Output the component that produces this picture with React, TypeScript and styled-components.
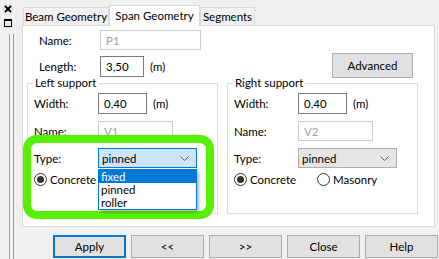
import React from "react";
import styled, { createGlobalStyle } from "styled-components";

const GlobalStyle = createGlobalStyle`
  html, body { margin: 0; padding: 0; }
  body {
    background: #f0f0f0;
    font-family: Lato, "Noto Sans", sans-serif;
    font-size: 11.5px;
    color: #000;
  }
  #root { width: 439px; height: 259px; overflow: hidden; }
`;

const Window = styled.div`
  display: flex;
  width: 439px;
  height: 259px;
  background: #f0f0f0;
`;

const Dock = styled.div`
  width: 22px;
  flex: none;
  display: flex;
  flex-direction: column;
  align-items: flex-start;
  padding: 4px 0 0 3px;
  box-sizing: border-box;
  gap: 4px;
`;

const DockButton = styled.div`
  width: 10px;
  height: 10px;
  display: flex;
`;

const Grip = styled.div`
  flex: 1;
  width: 3px;
  margin: 2px 0 0 6px;
  border-left: 1px solid #a0a0a0;
  border-right: 1px solid #a0a0a0;
`;

const Main = styled.div`
  flex: 1;
  display: flex;
  flex-direction: column;
`;

const TabStrip = styled.div`
  height: 25px;
  display: flex;
  align-items: flex-end;
  padding-left: 1px;
`;

const Tab = styled.div<{ $w: number; $active?: boolean }>`
  position: relative;
  box-sizing: border-box;
  width: ${(p) => p.$w}px;
  height: ${(p) => (p.$active ? 21 : 18)}px;
  margin-bottom: ${(p) => (p.$active ? -1 : 0)}px;
  border: 1px solid #d9d9d9;
  border-bottom: none;
  background: ${(p) => (p.$active ? "#ffffff" : "#f0f0f0")};
  z-index: ${(p) => (p.$active ? 2 : 0)};
  display: flex;
  align-items: center;
  justify-content: center;
  padding-bottom: ${(p) => (p.$active ? 2 : 0)}px;
  white-space: nowrap;
`;

const Panel = styled.div`
  position: relative;
  box-sizing: border-box;
  width: 413px;
  height: 202px;
  border: 1px solid #d9d9d9;
  background: #ffffff;
  display: flex;
  flex-direction: column;
`;

const TopArea = styled.div`
  display: flex;
  height: 57px;
  box-sizing: border-box;
  padding: 4px 0 0 16px;
`;

const FieldColumn = styled.div`
  display: flex;
  flex-direction: column;
  gap: 6px;
`;

const FieldRow = styled.div<{ $h?: number }>`
  display: flex;
  align-items: center;
  height: ${(p) => p.$h ?? 20}px;
`;

const Label = styled.div<{ $w: number }>`
  width: ${(p) => p.$w}px;
  flex: none;
`;

const TextBox = styled.div<{ $w: number; $h?: number; $disabled?: boolean }>`
  box-sizing: border-box;
  width: ${(p) => p.$w}px;
  height: ${(p) => p.$h ?? 20}px;
  border: 1px solid ${(p) => (p.$disabled ? "#cccccc" : "#7a7a7a")};
  color: ${(p) => (p.$disabled ? "#a0a0a0" : "#000")};
  background: #fff;
  display: flex;
  align-items: center;
  padding-left: 5px;
  flex: none;
`;

const Unit = styled.div`
  margin-left: 6px;
`;

const PushButton = styled.div<{ $w: number; $default?: boolean }>`
  box-sizing: border-box;
  width: ${(p) => p.$w}px;
  height: 23px;
  background: #e1e1e1;
  border: ${(p) => (p.$default ? "2px solid #0078d7" : "1px solid #adadad")};
  display: flex;
  align-items: center;
  justify-content: center;
  flex: none;
`;

const AdvancedButton = styled(PushButton)`
  height: 25px;
  margin: 23px 21px 0 auto;
`;

const Groups = styled.div`
  display: flex;
  gap: 9px;
  padding-left: 4px;
`;

const GroupBox = styled.div`
  position: relative;
  box-sizing: border-box;
  width: 191px;
  height: 131px;
  border: 1px solid #dcdcdc;
  display: flex;
  flex-direction: column;
  padding: 9px 0 0 6px;
  gap: 7px;
`;

const GroupTitle = styled.div`
  position: absolute;
  top: -9px;
  left: 5px;
  padding: 0 2px;
  background: #fff;
  line-height: 16px;
`;

const SelectWrap = styled.div`
  position: relative;
  flex: none;
`;

const Select = styled.div<{ $open?: boolean }>`
  box-sizing: border-box;
  width: 99px;
  height: 20px;
  border: 1px solid ${(p) => (p.$open ? "#0078d7" : "#adadad")};
  background: ${(p) => (p.$open ? "#cce4f7" : "#e5e5e5")};
  display: flex;
  align-items: center;
  padding: 0 7px 0 3px;
  justify-content: space-between;
`;

const DropList = styled.div`
  position: absolute;
  top: 100%;
  left: 0;
  width: 99px;
  box-sizing: border-box;
  border: 1px solid #0078d7;
  background: #fff;
  box-shadow: 2px 2px 3px rgba(0, 0, 0, 0.3);
  z-index: 5;
  margin-top: 1px;
`;

const DropItem = styled.div<{ $hl?: boolean }>`
  height: 13px;
  line-height: 13px;
  padding-left: 2px;
  background: ${(p) => (p.$hl ? "#0078d7" : "transparent")};
  color: ${(p) => (p.$hl ? "#fff" : "#000")};
`;

const RadioRow = styled.div`
  display: flex;
  align-items: center;
  height: 14px;
  margin-top: -3px;
`;

const RadioOption = styled.div<{ $w?: number }>`
  display: flex;
  align-items: center;
  gap: 3px;
  width: ${(p) => (p.$w ? `${p.$w}px` : "auto")};
`;

const RadioCircle = styled.div<{ $checked?: boolean }>`
  box-sizing: border-box;
  width: 13px;
  height: 13px;
  border-radius: 50%;
  border: 1px solid #333;
  background: #fff;
  display: flex;
  align-items: center;
  justify-content: center;
  &::after {
    content: "";
    width: 7px;
    height: 7px;
    border-radius: 50%;
    background: ${(p) => (p.$checked ? "#333" : "transparent")};
  }
`;

const Highlight = styled.div`
  position: absolute;
  left: 0;
  top: 109px;
  width: 191px;
  height: 84px;
  box-sizing: border-box;
  border: 8px solid #57f000;
  border-radius: 14px;
  pointer-events: none;
  z-index: 4;
`;

const ButtonBar = styled.div`
  display: flex;
  gap: 5px;
  padding: 8px 0 0 31px;
`;

const Chevron = () => (
  <svg width="9" height="5" viewBox="0 0 9 5">
    <path d="M0.5 0.5 L4.5 4.5 L8.5 0.5" fill="none" stroke="#606060" strokeWidth="1" />
  </svg>
);

const CloseIcon = () => (
  <svg width="10" height="10" viewBox="0 0 10 10">
    <rect x="0" y="0" width="10" height="10" fill="#e6e6e6" />
    <path d="M2 2 L8 8 M8 2 L2 8" stroke="#000" strokeWidth="1.8" />
  </svg>
);

const FloatIcon = () => (
  <svg width="10" height="10" viewBox="0 0 10 10">
    <rect x="0" y="0" width="10" height="10" fill="#e6e6e6" />
    <rect x="1.5" y="1.5" width="7" height="7" fill="none" stroke="#000" strokeWidth="1" />
    <rect x="1" y="1" width="8" height="2" fill="#000" />
  </svg>
);

type SupportProps = {
  title: string;
  name: string;
  open?: boolean;
};

const Support: React.FC<SupportProps> = ({ title, name, open }) => (
  <GroupBox>
    <GroupTitle>{title}</GroupTitle>
    <FieldRow $h={21}>
      <Label $w={64}>Width:</Label>
      <TextBox $w={49} $h={21}>0,40</TextBox>
      <Unit>(m)</Unit>
    </FieldRow>
    <FieldRow>
      <Label $w={64}>Name:</Label>
      <TextBox $w={75} $disabled>{name}</TextBox>
    </FieldRow>
    <FieldRow>
      <Label $w={64}>Type:</Label>
      <SelectWrap>
        <Select $open={open}>
          <span>pinned</span>
          <Chevron />
        </Select>
        {open && (
          <DropList>
            <DropItem $hl>fixed</DropItem>
            <DropItem>pinned</DropItem>
            <DropItem>roller</DropItem>
          </DropList>
        )}
      </SelectWrap>
    </FieldRow>
    <RadioRow>
      <RadioOption $w={83}>
        <RadioCircle $checked />
        <span>Concrete</span>
      </RadioOption>
      <RadioOption>
        <RadioCircle />
        <span>Masonry</span>
      </RadioOption>
    </RadioRow>
  </GroupBox>
);

export default function App() {
  return (
    <>
      <GlobalStyle />
      <Window>
        <Dock>
          <DockButton>
            <CloseIcon />
          </DockButton>
          <DockButton>
            <FloatIcon />
          </DockButton>
          <Grip />
        </Dock>
        <Main>
          <TabStrip>
            <Tab $w={86}>Beam Geometry</Tab>
            <Tab $w={91} $active>
              Span Geometry
            </Tab>
            <Tab $w={55}>Segments</Tab>
          </TabStrip>
          <Panel>
            <TopArea>
              <FieldColumn>
                <FieldRow>
                  <Label $w={61}>Name:</Label>
                  <TextBox $w={101} $disabled>P1</TextBox>
                </FieldRow>
                <FieldRow $h={21}>
                  <Label $w={61}>Length:</Label>
                  <TextBox $w={44} $h={21}>3,50</TextBox>
                  <Unit>(m)</Unit>
                </FieldRow>
              </FieldColumn>
              <AdvancedButton $w={81}>Advanced</AdvancedButton>
            </TopArea>
            <Groups>
              <Support title="Left support" name="V1" open />
              <Support title="Right support" name="V2" />
            </Groups>
            <Highlight />
          </Panel>
          <ButtonBar>
            <PushButton $w={73} $default>Apply</PushButton>
            <PushButton $w={73}>&lt;&lt;</PushButton>
            <PushButton $w={73}>&gt;&gt;</PushButton>
            <PushButton $w={73}>Close</PushButton>
            <PushButton $w={73}>Help</PushButton>
          </ButtonBar>
        </Main>
      </Window>
    </>
  );
}
